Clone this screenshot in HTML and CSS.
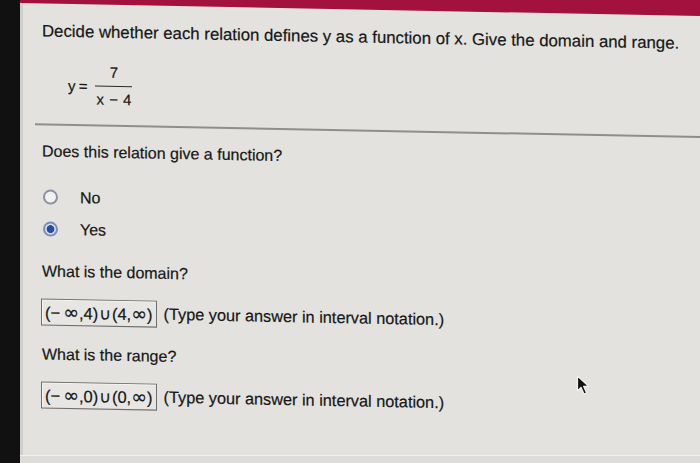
FILE: index.html
```html
<!DOCTYPE html>
<html lang="en">
<head>
<meta charset="utf-8">
<title>Function, domain and range</title>
<link rel="stylesheet" href="styles.css">
</head>
<body>
  <div class="bezel"></div>
  <div class="display">
    <div class="screen-wrap">
      <main class="screen">
        <p class="title">Decide whether each relation defines y as a function of x. Give the domain and range.</p>
        <div class="equation">
          <span class="lhs">y =</span>
          <span class="frac">
            <span class="num">7</span>
            <span class="den">x − 4</span>
          </span>
        </div>
        <hr class="sep">
        <p class="question">Does this relation give a function?</p>
        <div class="options">
          <div class="option"><span class="radio"></span><span>No</span></div>
          <div class="option"><span class="radio checked"></span><span>Yes</span></div>
        </div>
        <p class="prompt">What is the domain?</p>
        <div class="answer-row">
          <span class="answer-box">(<span class="minus">−</span><span class="sym">∞</span>,4)<span class="sym cup">∪</span>(4,<span class="sym">∞</span>)</span>
          <span class="hint">(Type your answer in interval notation.)</span>
        </div>
        <p class="prompt">What is the range?</p>
        <div class="answer-row">
          <span class="answer-box">(<span class="minus">−</span><span class="sym">∞</span>,0)<span class="sym cup">∪</span>(0,<span class="sym">∞</span>)</span>
          <span class="hint">(Type your answer in interval notation.)</span>
        </div>
      </main>
    </div>
    <div class="bottom-edge"></div>
  </div>
  <svg class="cursor" width="15" height="21" viewBox="0 0 15 21">
    <path d="M1.5 1 L1.5 16 L5 12.3 L8 19 L10.6 18 L7.6 11.3 L12.6 11.3 Z" fill="#111" stroke="#f2f2f2" stroke-width="1.2" stroke-linejoin="round"/>
  </svg>
</body>
</html>
```
FILE: styles.css
```css
html, body {
  margin: 0;
  padding: 0;
}
body {
  position: relative;
  display: flex;
  width: 700px;
  height: 463px;
  overflow: hidden;
  background: #111;
  font-family: "Liberation Sans", Arial, sans-serif;
  color: #161616;
  -webkit-text-stroke: 0.2px #161616;
}
.bezel {
  flex: none;
  width: 20px;
  background: #121111;
}
.display {
  flex: 1;
  display: flex;
  flex-direction: column;
}
.screen-wrap {
  flex: 1;
  overflow: hidden;
  background: #a3123f;
}
.screen {
  display: block;
  margin-top: 3px;
  height: 470px;
  padding: 18px 0 0 19px;
  background: #e3e2de;
  border-left: 3px solid #cfcfcb;
  transform: skewY(1.1deg);
  transform-origin: 0 0;
  box-sizing: border-box;
}
p {
  margin: 0;
}
.title {
  font-size: 16.8px;
  line-height: 20px;
}
.equation {
  display: flex;
  align-items: center;
  margin: 22px 0 0 26px;
  font-size: 15px;
}
.lhs {
  margin-right: 8px;
  word-spacing: -1px;
}
.frac {
  display: flex;
  flex-direction: column;
  align-items: center;
}
.num {
  line-height: 16px;
  padding: 0 0 5px;
  border-bottom: 1px solid #2a2a2a;
  width: 37px;
  text-align: center;
}
.den {
  line-height: 16px;
  padding-top: 5px;
  word-spacing: 1px;
}
.sep {
  margin: 17px 0 0 -7px;
  border: 0;
  height: 1.5px;
  background: #8e8e8c;
}
.question {
  margin-top: 16px;
  font-size: 16px;
  line-height: 20px;
}
.options {
  display: flex;
  flex-direction: column;
  gap: 12px;
  margin-top: 26px;
  margin-left: 1px;
}
.option {
  display: flex;
  align-items: center;
  gap: 22px;
  font-size: 16px;
  line-height: 20px;
}
.radio {
  width: 15px;
  height: 15px;
  box-sizing: border-box;
  border-radius: 50%;
  border: 2px solid #8e90a0;
  background: #f1f1f0;
  -webkit-text-stroke: 0;
}
.radio.checked {
  border: 2px solid #7f8cb8;
  background: radial-gradient(circle, #2a4c9e 0 3.6px, #d6dbee 4.2px);
}
.prompt {
  margin-top: 22px;
  font-size: 16px;
  line-height: 20px;
}
.prompt + .answer-row {
  margin-top: 17px;
}
.answer-row + .prompt {
  margin-top: 19px;
}
.answer-row {
  display: flex;
  align-items: center;
  gap: 7px;
  font-size: 16px;
  line-height: 20px;
}
.answer-box {
  display: inline-block;
  margin-left: -1px;
  padding: 3px 3px 2px 3px;
  border: 1px solid #6e6e6c;
  box-shadow: inset 1px 1px 0 #f4f4f2;
  background: #e7e6e2;
  white-space: nowrap;
  font-size: 16.5px;
  line-height: 20px;
}
.minus {
  margin-right: 3px;
}
.sym {
  font-family: "DejaVu Sans", sans-serif;
  font-size: 19px;
  line-height: 10px;
}
.sym.cup {
  font-size: 16px;
  margin: 0 1px;
}
.hint {
  font-size: 16.3px;
}
.bottom-edge {
  flex: none;
  height: 7px;
  background: #dddcd8;
  border-top: 1px solid #f1f1ee;
}
.cursor {
  position: absolute;
  left: 576px;
  top: 375px;
}
```
